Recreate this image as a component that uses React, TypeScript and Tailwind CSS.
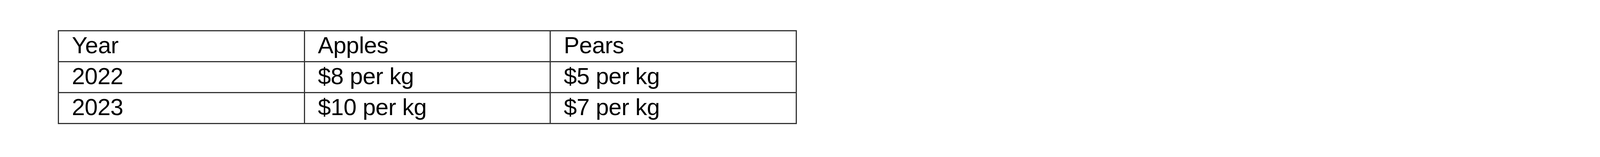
import React from 'react';

const rows = [
  ['Year', 'Apples', 'Pears'],
  ['2022', '$8 per kg', '$5 per kg'],
  ['2023', '$10 per kg', '$7 per kg'],
];

const App: React.FC = () => {
  return (
    <div className="w-full bg-white pt-[77px] pl-[148px]">
      <table
        className="w-[1892px] table-fixed border-collapse text-black"
        style={{ fontFamily: '"Liberation Sans", Arial, sans-serif' }}
      >
        <tbody>
          {rows.map((row, i) => (
            <tr key={i}>
              {row.map((cell, j) => (
                <td
                  key={j}
                  className="border-[3px] border-[#353535] pl-[33px] pb-[4px] pt-0 text-[60px] leading-[72px] tracking-[-0.5px] align-top whitespace-nowrap"
                >
                  {cell}
                </td>
              ))}
            </tr>
          ))}
        </tbody>
      </table>
    </div>
  );
};

export default App;
